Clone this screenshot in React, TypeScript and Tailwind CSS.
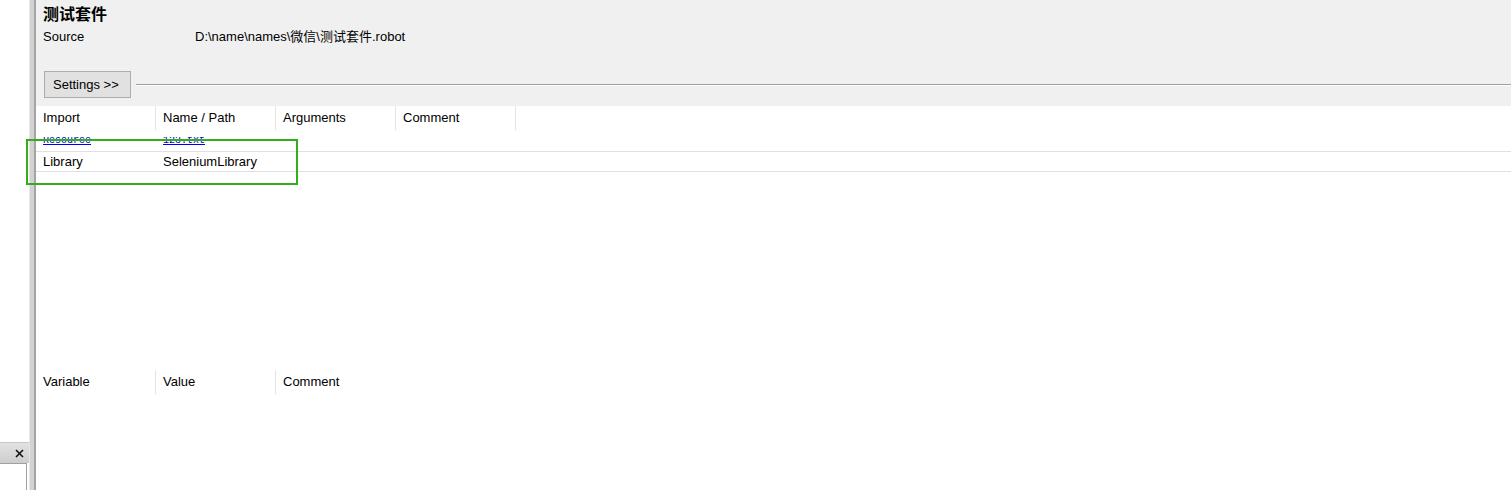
const uiFont = { fontFamily: '"Liberation Sans", "Noto Sans CJK SC", sans-serif' };

const importCols = ["Import", "Name / Path", "Arguments", "Comment"];
const varCols = ["Variable", "Value", "Comment"];

const App = () => {
  return (
    <div
      className="relative flex h-[490px] w-[1511px] overflow-hidden bg-white text-[13px] text-black"
      style={uiFont}
    >
      {/* left tree pane */}
      <div className="flex w-[29px] flex-col">
        <div className="flex-1 bg-white" />
        <div className="flex h-[21px] items-center justify-end border-t border-[#c8c8c8] bg-gradient-to-b from-[#e2e2e2] to-[#cdcdcd] pr-[5px]">
          <svg width="9" height="9" viewBox="0 0 9 9">
            <path d="M1 1 L8 8 M8 1 L1 8" stroke="#111" strokeWidth="1.6" />
          </svg>
        </div>
        <div className="h-[27px] bg-white">
          <div className="h-full w-[27px] border-r border-t border-[#a0a0a0]" />
        </div>
      </div>

      {/* splitter */}
      <div className="w-[7px] border-l border-r-2 border-l-[#e6e6e6] border-r-[#a4a4a4] bg-[#d2d2d2]" />

      {/* main editor */}
      <div className="flex flex-1 flex-col">
        <div className="h-[106px] bg-[#f0f0f0] pl-[7px]">
          <div
            className="pt-[3px] text-[16px] font-bold leading-[20px]"
            style={{ fontFamily: '"Noto Sans CJK SC", sans-serif' }}
          >
            测试套件
          </div>
          <div className="mt-[6px] flex leading-[16px]">
            <span className="w-[152px]">Source</span>
            <span>D:\name\names\微信\测试套件.robot</span>
          </div>
          <div className="mt-[26px] flex items-center">
            <button className="ml-[1px] h-[27px] w-[87px] border border-[#adadad] bg-[#e1e1e1] pl-[8px] text-left text-[13px]">
              Settings &gt;&gt;
            </button>
            <div className="ml-[5px] flex-1 border-t border-b border-t-[#a0a0a0] border-b-white" />
          </div>
        </div>

        {/* imports table */}
        <div className="h-[264px]">
          <div className="flex h-[24px]">
            {importCols.map((c) => (
              <div key={c} className="flex w-[120px] items-center border-r border-[#e3e3e3] pl-[7px]">
                {c}
              </div>
            ))}
          </div>
          <div className="flex h-[22px] border-b border-[#e0e0e0]">
            {["Resource", "123.txt"].map((c) => (
              <div key={c} className="w-[120px] pl-[7px] pt-[7px]">
                <div className="flex h-[10px] items-end overflow-hidden">
                  <span
                    className="shrink-0 text-[10px] leading-[12px] text-[#0000ee] underline"
                    style={{ fontFamily: '"Liberation Mono", monospace' }}
                  >
                    {c}
                  </span>
                </div>
              </div>
            ))}
          </div>
          <div className="flex h-[20px] items-center border-b border-[#e0e0e0]">
            <div className="w-[120px] pl-[7px]">Library</div>
            <div className="w-[120px] pl-[7px]">SeleniumLibrary</div>
          </div>
        </div>

        {/* variables table */}
        <div className="flex h-[24px]">
          {varCols.map((c, i) => (
            <div
              key={c + i}
              className={
                i < 2
                  ? "flex w-[120px] items-center border-r border-[#e3e3e3] pl-[7px]"
                  : "flex w-[120px] items-center pl-[7px]"
              }
            >
              {c}
            </div>
          ))}
        </div>
        <div className="flex-1" />
      </div>

      {/* highlight annotation */}
      <div className="absolute left-[26px] top-[139px] h-[46px] w-[272px] border-2 border-[#34ad1d]" />
    </div>
  );
};

export default App;
